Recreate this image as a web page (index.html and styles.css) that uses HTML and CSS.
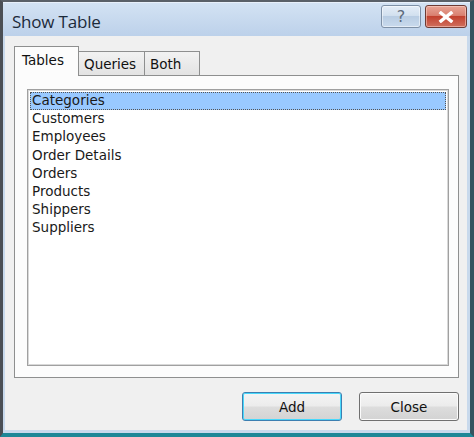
FILE: index.html
```html
<!DOCTYPE html>
<html>
<head>
<meta charset="utf-8">
<link rel="stylesheet" href="styles.css">
<title>Show Table</title>
</head>
<body>
<div class="window">
  <div class="titlebar">
    <span class="title">Show Table</span>
    <div class="caption-buttons">
      <div class="cap-btn help">?</div>
      <div class="cap-btn close">
        <svg width="18" height="12" viewBox="0 0 18 12"><path d="M4 2 L14 10 M14 2 L4 10" stroke="#fff" stroke-width="3.4" stroke-linecap="square"/></svg>
      </div>
    </div>
  </div>
  <div class="frame">
    <div class="client">
      <div class="tabs">
        <div class="tab active">Tables</div>
        <div class="tab">Queries</div>
        <div class="tab">Both</div>
      </div>
      <div class="panel">
        <div class="listbox">
          <div class="item selected">Categories</div>
          <div class="item">Customers</div>
          <div class="item">Employees</div>
          <div class="item">Order Details</div>
          <div class="item">Orders</div>
          <div class="item">Products</div>
          <div class="item">Shippers</div>
          <div class="item">Suppliers</div>
        </div>
      </div>
      <div class="actions">
        <button class="btn default">Add</button>
        <button class="btn">Close</button>
      </div>
    </div>
  </div>
</div>
</body>
</html>
```

FILE: styles.css
```css
html, body {
  margin: 0;
  padding: 0;
  background: #3d4650;
}
.window {
  width: 474px;
  height: 437px;
  box-sizing: border-box;
  border-left: 3px solid #4b4f55;
  border-top: 2px solid #5a6068;
  border-right: 4px solid #35535f;
  border-bottom: 4px solid #1d8797;
  display: flex;
  flex-direction: column;
  background: #c6d8ec;
  font-family: "DejaVu Sans", Tahoma, sans-serif;
}
.titlebar {
  height: 33px;
  flex: none;
  display: flex;
  align-items: flex-start;
  justify-content: space-between;
  background: linear-gradient(#d3e2f3, #bcd1ea);
  border-top: 1px solid #e8f0fa;
}
.title {
  font-family: "Open Sans", "Noto Sans", sans-serif;
  font-size: 17px;
  color: #1c2a3a;
  padding-left: 9px;
  padding-top: 7px;
  letter-spacing: -0.2px;
}
.caption-buttons {
  display: flex;
  gap: 4px;
  padding-top: 2px;
  padding-right: 3px;
}
.cap-btn {
  width: 40px;
  height: 23px;
  border-radius: 3px;
  display: flex;
  align-items: center;
  justify-content: center;
  box-sizing: border-box;
}
.help {
  border: 1px solid #7e90a6;
  background: linear-gradient(#e4edf7 0%, #d2e0ef 45%, #b9cde3 50%, #c9daed 100%);
  box-shadow: inset 0 0 0 1px rgba(255,255,255,0.5);
  color: #5d6b7c;
  font-family: "DejaVu Sans", sans-serif;
  font-size: 16px;
}
.close {
  width: 42px;
  border: 1px solid #6d3a33;
  background: linear-gradient(#e8a495 0%, #d98070 45%, #c2412e 50%, #d0705e 100%);
  box-shadow: inset 0 0 0 1px rgba(255,220,210,0.5);
}
.frame {
  flex: 1;
  display: flex;
  padding: 0 3px 3px 2px;
  background: #c8d9ec;
}
.client {
  flex: 1;
  background: #f0f0f0;
  display: flex;
  flex-direction: column;
  padding: 10px 8px 0 9px;
}
.tabs {
  display: flex;
  align-items: flex-end;
  height: 29px;
  position: relative;
  z-index: 1;
  font-size: 13.5px;
  color: #111;
}
.tab {
  height: 24px;
  box-sizing: border-box;
  border: 1px solid #8e8f8f;
  border-bottom: none;
  background: linear-gradient(#f2f2f2, #e3e3e3);
  padding: 4px 6px 0 5px;
  margin-left: -1px;
}
.tab.active {
  width: 65px;
  background: #fcfcfc;
  margin-left: 0;
  margin-bottom: -1px;
  height: 30px;
  padding-top: 5px;
  padding-left: 7px;
  border-bottom: none;
}
.tab:nth-child(2) { width: 67px; }
.tab:nth-child(3) { width: 56px; }
.panel {
  height: 303px;
  box-sizing: border-box;
  border: 1px solid #8e8f8f;
  background: #fcfcfc;
  padding: 13px 9px 0 12px;
}
.listbox {
  height: 277px;
  box-sizing: border-box;
  border: 1px solid #a0a0a0;
  box-shadow: inset 0 0 0 1px #d8d8d8;
  background: #fff;
  padding: 2px;
  font-size: 13.5px;
  color: #1a1a1a;
}
.item {
  height: 18.2px;
  line-height: 17px;
  padding-left: 2px;
  box-sizing: border-box;
}
.item.selected {
  background: #99c9ff;
  outline: 1px dotted #555;
  outline-offset: -1px;
}
.actions {
  display: flex;
  justify-content: flex-end;
  gap: 17px;
  padding-top: 14px;
}
.btn {
  width: 100px;
  height: 29px;
  border: 1px solid #707070;
  border-radius: 3px;
  background: linear-gradient(#f4f4f4 0%, #ececec 48%, #dddddd 52%, #d3d3d3 100%);
  box-shadow: inset 0 0 0 1px #fbfbfb;
  font-family: "DejaVu Sans", Tahoma, sans-serif;
  font-size: 13.5px;
  color: #111;
  padding: 0;
}
.btn.default {
  border-color: #3c7fb1;
  box-shadow: inset 0 0 0 1px #48d8fb;
}
```
